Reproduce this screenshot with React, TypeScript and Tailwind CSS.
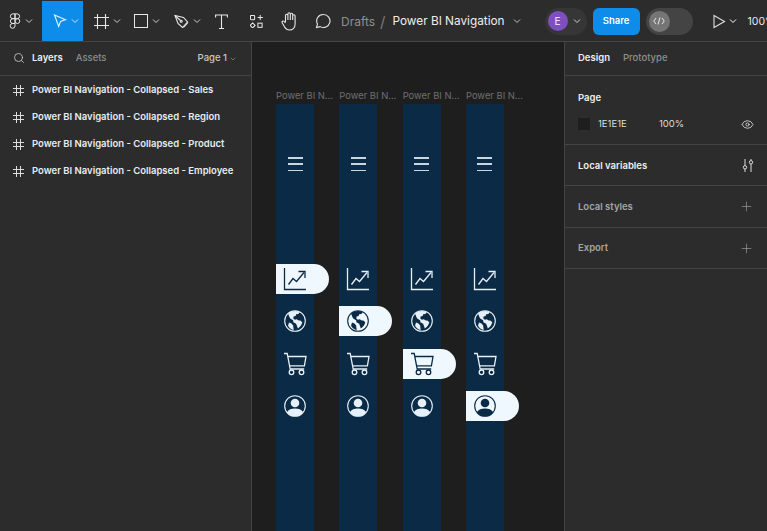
import { ChevronDown, Eye, Plus, Search } from "lucide-react";
import type { ReactNode } from "react";

const layers = ["Sales", "Region", "Product", "Employee"];

const Chev = ({ className = "text-[#d0d0d0]" }: { className?: string }) => (
  <svg viewBox="0 0 8 8" className={`h-2 w-2 shrink-0 ${className}`} fill="none" stroke="currentColor" strokeWidth="1">
    <path d="M1 2.500 4 5.500 7 2.500" />
  </svg>
);

// toolbar cell; with a chevron the icon sits left, without one it is centred
const Tool = ({ w, chev, active, children }: { w: string; chev?: boolean; active?: boolean; children: ReactNode }) => (
  <div
    className={`flex h-full shrink-0 items-center gap-[4px] ${w} ${chev ? "pl-[11px]" : "justify-center"} ${active ? "bg-[#0d8ce9]" : ""}`}
  >
    {children}
    {chev && <Chev className={active ? "text-[#cfe8fb]" : "text-[#d0d0d0]"} />}
  </div>
);

const ChartIcon = ({ color }: { color: string }) => (
  <svg width="24" height="24" viewBox="0 0 24 24" fill="none" stroke={color} strokeWidth="1.300">
    <path d="M1.500 1v21.500H23" />
    <path d="M5.500 17.500 10 11.500l3.500 3L21 5.500" />
    <path d="M15.500 4.500H22V11" />
  </svg>
);

const GlobeIcon = ({ color, bg }: { color: string; bg: string }) => (
  <svg width="24" height="24" viewBox="0 0 24 24">
    <circle cx="12" cy="12" r="10.300" fill={bg} stroke={color} strokeWidth="1.100" />
    <path
      fill={color}
      d="M5 4.500C7 2.700 9.500 2 12 2c1.700 0 3.300.4 4.700 1.200l-1.300 1.700-2.200.4-.6 1.700-2 .6-.3 2 1.600 1.200 2-.6 1.200 1.100 2.700.5 1.500 1.600-1.300 3-2.200 2.300-1 .9-.8-2.600-.9-2.200-2.700-1.500-.3-2.100-2.900-1.800L6.300 7.700z"
    />
    <path fill={color} d="M6 13.500l2.500 1 1.600 2 .6 4.500c-2.400-.5-4.600-2.100-5.700-4.200z" />
  </svg>
);

const CartIcon = ({ color }: { color: string }) => (
  <svg width="24" height="24" viewBox="0 0 24 24" fill="none" stroke={color} strokeWidth="1.300">
    <path d="M1 1.500h3.200l3 15.500h14" />
    <path d="M4.800 4.500h18.200l-1.600 9.300H6.600" />
    <circle cx="8.500" cy="20.300" r="2.300" />
    <circle cx="18.500" cy="20.300" r="2.300" />
  </svg>
);

const PersonIcon = ({ color, bg }: { color: string; bg: string }) => (
  <svg width="24" height="24" viewBox="0 0 24 24">
    <circle cx="12" cy="12" r="10.300" fill={bg} stroke={color} strokeWidth="1.100" />
    <circle cx="12" cy="9" r="4.300" fill={color} />
    <path fill={color} d="M3.800 18.200C5.500 15.600 8.500 14.500 12 14.500s6.500 1.100 8.200 3.700C18.400 20.900 15.400 22.300 12 22.300s-6.400-1.400-8.200-4.100z" />
  </svg>
);

const NavFrame = ({ active }: { active: number }) => {
  const icon = (i: number, on: boolean) => {
    const color = on ? "#0b2a45" : "#e6f0f8";
    const bg = on ? "#f0f8ff" : "#0b2a45";
    if (i === 0) return <ChartIcon color={color} />;
    if (i === 1) return <GlobeIcon color={color} bg={bg} />;
    if (i === 2) return <CartIcon color={color} />;
    return <PersonIcon color={color} bg={bg} />;
  };
  return (
    <div className="w-[63.330px] shrink-0">
      <div className="mb-[2px] h-[12px] whitespace-nowrap text-[9.400px] leading-[12px] text-[#6f6f6f]">Power BI N...</div>
      <div className="h-[427px] w-[38px] bg-[#0b2a45] pt-[53px]">
        <div className="flex h-[14px] w-[38px] flex-col items-center justify-between">
          <div className="h-[1.500px] w-[15px] bg-[#c6d6e2]" />
          <div className="h-[1.500px] w-[15px] bg-[#c6d6e2]" />
          <div className="h-[1.500px] w-[15px] bg-[#c6d6e2]" />
        </div>
        <div className="mt-[87px] flex flex-col">
          {[0, 1, 2, 3].map((i) => (
            <div key={i} className="flex h-[42.330px] items-center">
              <div className={`flex h-[30px] shrink-0 items-center ${i === active ? "w-[53px] rounded-r-[15px] bg-[#f0f8ff]" : "w-[38px]"}`}>
                <div className="flex w-[38px] justify-center">{icon(i, i === active)}</div>
              </div>
            </div>
          ))}
        </div>
      </div>
    </div>
  );
};

const Section = ({ title, dim, icon }: { title: string; dim?: boolean; icon: ReactNode }) => (
  <div className="flex h-[41.330px] items-center justify-between border-b border-[#444444] pl-[13px] pr-[13px] pt-[1px]">
    <span className={`font-semibold ${dim ? "text-[#a5a5a5]" : "text-[#eeeeee]"}`}>{title}</span>
    {icon}
  </div>
);

export default function App() {
  return (
    <div className="flex h-[531px] w-[767px] flex-col overflow-hidden bg-[#1e1e1e] font-['Inter',sans-serif] text-[9.500px] text-white antialiased">
      {/* toolbar */}
      <header className="flex h-[42px] shrink-0 items-center overflow-hidden border-b border-[#444444] bg-[#2c2c2c] pt-[1px]">
        <div className="flex h-full w-[42px] shrink-0 items-center gap-[4px] pl-[9px]">
          <svg width="12" height="16" viewBox="0 0 12 18" fill="none" stroke="#e8e8e8" strokeWidth="1.100">
            <path d="M6 1H3.500a2.700 2.700 0 0 0 0 5.400H6zM6 1h2.500a2.700 2.700 0 0 1 0 5.400H6zM6 6.400H3.500a2.700 2.700 0 0 0 0 5.400H6zM6 11.800H3.500A2.700 2.700 0 1 0 6 14.500z" />
            <circle cx="8.700" cy="9.100" r="2.700" />
          </svg>
          <Chev />
        </div>
        <Tool w="w-[41px]" chev active>
          <svg width="14" height="14" viewBox="0 0 14 14" fill="none" stroke="#e8f4fd" strokeWidth="1.100">
            <path d="M1.500 1 12.500 5.800 7.500 7.500 5.700 12.500z" />
          </svg>
        </Tool>
        <Tool w="w-[40px]" chev>
          <svg width="15" height="15" viewBox="0 0 15 15" fill="none" stroke="#e8e8e8" strokeWidth="1.100">
            <path d="M0 3.500h15M0 11.500h15M3.500 0v15M11.500 0v15" />
          </svg>
        </Tool>
        <Tool w="w-[40px]" chev>
          <div className="h-[14px] w-[14px] border border-[#e8e8e8]" />
        </Tool>
        <Tool w="w-[41px]" chev>
          <svg width="15" height="15" viewBox="0 0 15 15" fill="none" stroke="#e8e8e8" strokeWidth="1.100">
            <path d="M1 1.500 9.500 3.500 13.500 8 8.500 13.500 4 9.500z" />
            <circle cx="7.200" cy="7.200" r="1" />
            <path d="M1 1.500 6.500 6.500M9.500 13.500 14 8.500" />
          </svg>
        </Tool>
        <Tool w="w-[35px]">
          <svg width="13" height="15" viewBox="0 0 13 15" fill="none" stroke="#e8e8e8" strokeWidth="1.100">
            <path d="M.6 3.500V1h11.800v2.500M6.500 1v13.500M4 14.500h5" />
          </svg>
        </Tool>
        <Tool w="w-[34px]">
          <svg width="13" height="13" viewBox="0 0 14 14" fill="none" stroke="#e8e8e8" strokeWidth="1.100">
            <rect x="0.500" y="0.500" width="4.500" height="4.500" rx="0.800" />
            <path d="M11 0v5.500M8.200 2.800h5.600" />
            <path d="M2.800 8.500 5.500 11.200 2.800 13.900 0.100 11.200z" />
            <rect x="8.500" y="8.800" width="4.500" height="4.500" />
          </svg>
        </Tool>
        <Tool w="w-[32px]">
          <svg width="17" height="19" viewBox="0 0 17 19" fill="none" stroke="#e8e8e8" strokeWidth="1.100">
            <path d="M4.500 10V3.500a1.200 1.200 0 0 1 2.400 0V8M6.900 8V2a1.200 1.200 0 0 1 2.400 0v6M9.300 8V2.500a1.200 1.200 0 0 1 2.400 0V8M11.700 8V4a1.200 1.200 0 0 1 2.400 0v8c0 3.500-2.300 6-5.500 6-2.800 0-3.900-1.200-5-3L1.200 10.800c-.7-1.300 1-2.500 2-1.300L4.500 11" />
          </svg>
        </Tool>
        <Tool w="w-[36px]">
          <svg width="16" height="16" viewBox="0 0 16 16" fill="none" stroke="#e8e8e8" strokeWidth="1.100">
            <path d="M8.500 1.500a6.500 6.500 0 1 1-3.300 12.100L1.500 14.500l1-3.400A6.500 6.500 0 0 1 8.500 1.500z" />
          </svg>
        </Tool>
        <span className="mt-[2px] shrink-0 text-[12px] text-[#8f8f8f]">Drafts</span>
        <span className="ml-[5px] mt-[2px] shrink-0 text-[15px] text-[#7a7a7a]">/</span>
        <span className="ml-[7px] mt-[2px] shrink-0 whitespace-nowrap text-[11.800px] text-[#eeeeee]">Power BI Navigation</span>
        <Chev className="ml-[8px] text-[#c0c0c0]" />
        <div className="ml-[24px] flex h-[27px] w-[42px] shrink-0 items-center gap-[5px] rounded-full bg-[#363636] pl-[3px]">
          <div className="flex h-[20px] w-[20px] items-center justify-center rounded-full bg-[#7d4fc0] text-[10px] font-medium text-[#e8dcf6]">E</div>
          <Chev />
        </div>
        <div className="ml-[6px] flex h-[27px] w-[47px] shrink-0 items-center justify-center rounded-[6px] bg-[#0d8ce9] text-[9.500px] font-semibold">Share</div>
        <div className="ml-[6px] flex h-[27px] w-[47px] shrink-0 items-center rounded-full bg-[#444444] pl-[3px]">
          <div className="flex h-[21px] w-[21px] items-center justify-center rounded-full bg-[#757575] text-[#e8e8e8]">
            <svg width="12" height="10" viewBox="0 0 12 10" fill="none" stroke="currentColor" strokeWidth="1">
              <path d="M3 2 .800 5 3 8M9 2l2.200 3L9 8M7 1.500 5 8.500" />
            </svg>
          </div>
        </div>
        <svg className="ml-[19px] shrink-0" width="14" height="15" viewBox="0 0 14 15" fill="none" stroke="#e0e0e0" strokeWidth="1.100">
          <path d="M2 1.500 12.500 7.500 2 13.500z" />
        </svg>
        <Chev className="ml-[3px]" />
        <span className="ml-[11px] mt-[1px] shrink-0 whitespace-nowrap text-[10.500px] text-[#e8e8e8]">100%</span>
      </header>

      <div className="flex min-h-0 flex-1">
        {/* layers panel */}
        <aside className="w-[252px] shrink-0 border-r border-[#444444] bg-[#2c2c2c]">
          <div className="flex h-[34px] items-center border-b border-[#444444] pl-[13px] pr-[14px]">
            <Search className="-mt-[1px] h-[12px] w-[12px] text-[#d8d8d8]" strokeWidth={1.500} />
            <span className="ml-[7px] font-semibold text-[#eeeeee]">Layers</span>
            <span className="ml-[13px] font-medium text-[#8f8f8f]">Assets</span>
            <span className="ml-auto font-medium text-[#c8c8c8]">Page 1</span>
            <ChevronDown className="ml-[2px] h-[8px] w-[8px] text-[#8f8f8f]" />
          </div>
          <ul className="pt-[0.500px]">
            {layers.map((name) => (
              <li key={name} className="flex h-[27px] items-center pl-[13px]">
                <svg width="11" height="11" viewBox="0 0 11 11" fill="none" stroke="#dddddd" strokeWidth="1">
                  <path d="M0 3.500h11M0 7.500h11M3.500 0v11M7.500 0v11" />
                </svg>
                <span className="ml-[8px] whitespace-nowrap font-semibold text-[#e6edf2]">Power BI Navigation - Collapsed - {name}</span>
              </li>
            ))}
          </ul>
        </aside>

        {/* canvas */}
        <main className="flex min-w-0 flex-1 overflow-hidden pl-[24px] pt-[48px]">
          {[0, 1, 2, 3].map((i) => (
            <NavFrame key={i} active={i} />
          ))}
        </main>

        {/* design panel */}
        <aside className="w-[203px] shrink-0 border-l border-[#444444] bg-[#2c2c2c]">
          <div className="flex h-[34px] items-center border-b border-[#444444] pl-[13px]">
            <span className="font-semibold text-[#eeeeee]">Design</span>
            <span className="ml-[13px] font-medium text-[#8f8f8f]">Prototype</span>
          </div>
          <div className="h-[69px] border-b border-[#444444] pl-[13px] pr-[13px] pt-[15px]">
            <div className="font-semibold text-[#eeeeee]">Page</div>
            <div className="mt-[12px] flex items-center">
              <div className="h-[12px] w-[12px] bg-[#1e1e1e]" />
              <span className="ml-[8px] w-[61px] text-[#dddddd]">1E1E1E</span>
              <span className="text-[#dddddd]">100%</span>
              <Eye className="ml-auto h-[13px] w-[13px] text-[#e0e0e0]" strokeWidth={1.500} />
            </div>
          </div>
          <Section
            title="Local variables"
            icon={
              <svg width="12" height="13" viewBox="0 0 12 13" fill="none" stroke="#dddddd" strokeWidth="1">
                <path d="M3 0v6.500M3 10v3M9 0v1.500M9 5v8" />
                <circle cx="3" cy="8.300" r="1.700" />
                <circle cx="9" cy="3.300" r="1.700" />
              </svg>
            }
          />
          <Section title="Local styles" dim icon={<Plus className="h-[15px] w-[15px] text-[#a5a5a5]" strokeWidth={1} />} />
          <Section title="Export" dim icon={<Plus className="h-[15px] w-[15px] text-[#a5a5a5]" strokeWidth={1} />} />
        </aside>
      </div>
    </div>
  );
}
